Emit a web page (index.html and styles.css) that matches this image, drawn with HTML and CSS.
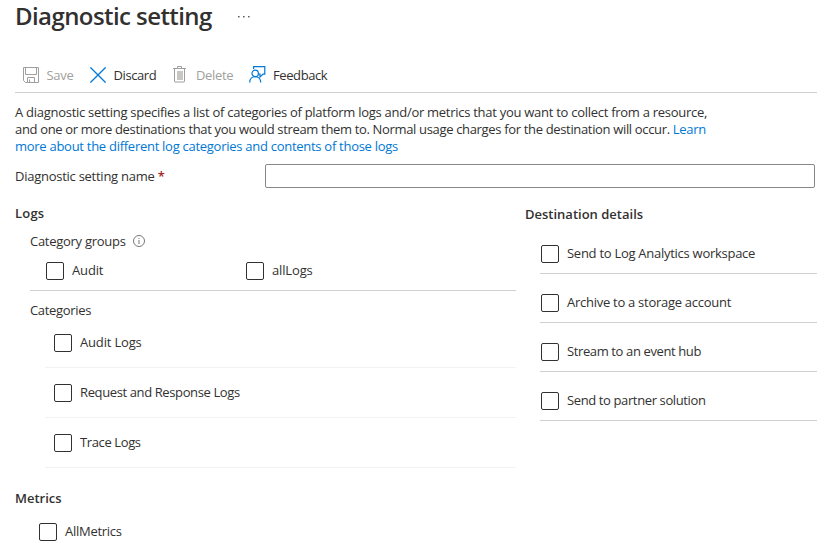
FILE: index.html
```
<!DOCTYPE html>
<html lang="en">
<head>
<meta charset="utf-8">
<title>Diagnostic setting</title>
<link rel="stylesheet" href="styles.css">
</head>
<body>
<header class="header">
  <h1 class="title">Diagnostic setting</h1>
  <svg class="more" width="12" height="3" viewBox="0 0 12 3" fill="#605e5c"><rect x="0" y="1" width="1.6" height="1.4"/><rect x="5" y="1" width="1.6" height="1.4"/><rect x="10" y="1" width="1.6" height="1.4"/></svg>
</header>
<nav class="toolbar">
  <span class="command save disabled">
    <svg width="16" height="16" viewBox="0 0 16 16" fill="none" stroke="#a19f9d"><path d="M.5.5h15v15H2.500l-2-2zM2.500.5v7h11v-7M4.500 15.500v-5h7v5M6.500 12.500v3"/></svg>
    <span class="label">Save</span>
  </span>
  <span class="command discard">
    <svg width="16" height="16" viewBox="0 0 16 16" fill="none" stroke="#0078d4" stroke-width="1.300"><path d="M.4.4l15.200 15.200M15.600.4L.4 15.600"/></svg>
    <span class="label">Discard</span>
  </span>
  <span class="command delete disabled">
    <svg width="14" height="17" viewBox="0 0 14 17"><path d="M4 5h6v9H4z" fill="#c8c6c4"/><path d="M0 2.500h13M4.500 2.500v-2h4v2M1.500 2.500v13q0 .5.5.5h9q.5 0 .5-.5v-13" fill="none" stroke="#a19f9d"/></svg>
    <span class="label">Delete</span>
  </span>
  <span class="command feedback">
    <svg width="17" height="17" viewBox="0 0 17 17" fill="none" stroke="#0078d4" stroke-width="1.200"><path d="M4.600 3V.6h11.200v7.500H14l-3 3V8.100H9.500"/><circle cx="6.200" cy="7.400" r="3.200"/><path d="M.7 16.500c0-3.500 2.400-5.900 5.500-5.900s5.500 2.400 5.500 5.900"/></svg>
    <span class="label">Feedback</span>
  </span>
</nav>
<p class="description">
  <span class="line line-1">A diagnostic setting specifies a list of categories of platform logs and/or metrics that you want to collect from a resource,</span>
  <span class="line line-2">and one or more destinations that you would stream them to. Normal usage charges for the destination will occur. <a>Learn</a></span>
  <span class="line line-3"><a>more about the different log categories and contents of those logs</a></span>
</p>
<div class="name-row">
  <label class="name-label" for="name">Diagnostic setting name <b class="required">*</b></label>
  <input class="name-input" id="name" type="text">
</div>
<main class="columns">
  <section class="sources">
    <h2 class="heading logs">Logs</h2>
    <div class="groups">
      <div class="subheading">Category groups
        <svg width="12" height="12" viewBox="0 0 12 12" fill="none" stroke="#797775"><circle cx="6" cy="6" r="5.500"/><path d="M6 5v4M6 3v1"/></svg>
      </div>
      <div class="group-options">
        <label class="check"><input type="checkbox"><span>Audit</span></label>
        <label class="check"><input type="checkbox"><span>allLogs</span></label>
      </div>
    </div>
    <div class="categories-title">Categories</div>
    <div class="categories">
      <label class="check category"><input type="checkbox"><span>Audit Logs</span></label>
      <label class="check category tight"><input type="checkbox"><span>Request and Response Logs</span></label>
      <label class="check category tight"><input type="checkbox"><span>Trace Logs</span></label>
    </div>
    <h2 class="heading metrics">Metrics</h2>
    <label class="check all-metrics"><input type="checkbox"><span>AllMetrics</span></label>
  </section>
  <section class="destinations">
    <h2 class="heading">Destination details</h2>
    <div class="destination-list">
      <label class="check destination"><input type="checkbox"><span>Send to Log Analytics workspace</span></label>
      <label class="check destination"><input type="checkbox"><span>Archive to a storage account</span></label>
      <label class="check destination tight"><input type="checkbox"><span>Stream to an event hub</span></label>
      <label class="check destination tight"><input type="checkbox"><span>Send to partner solution</span></label>
    </div>
  </section>
</main>
</body>
</html>
```
FILE: styles.css
```
* { box-sizing: border-box; }
body {
  margin: 0;
  height: 552px;
  overflow: hidden;
  padding-left: 15px;
  background: #fff;
  color: #323130;
  font: 13px/18px "Open Sans", "Noto Sans", sans-serif;
  letter-spacing: -0.15px;
  white-space: nowrap;
}
h1, h2, p { margin: 0; }
svg { display: block; flex: none; }
a { color: #0078d4; }
.header { display: flex; align-items: center; height: 32px; }
.title { width: 223px; font-size: 24px; line-height: 32px; font-weight: 600; letter-spacing: -0.58px; }
.toolbar { display: flex; align-items: center; height: 61px; padding: 25px 0 0 8px; border-bottom: 1px solid #d2d0ce; }
.command { display: flex; align-items: center; gap: 7.500px; letter-spacing: -0.4px; }
.save { width: 67px; letter-spacing: -0.3px; }
.discard { width: 83px; }
.delete { width: 75.500px; gap: 9px; letter-spacing: -0.35px; }
.feedback svg { margin-top: -1px; }
.disabled { color: #a19f9d; }
.description { padding-top: 11px; }
.line { display: block; line-height: 17px; letter-spacing: -0.275px; }
.line-2 { letter-spacing: -0.337px; }
.line-3 { letter-spacing: -0.275px; }
.name-row { display: flex; align-items: center; height: 24px; margin-top: 9px; }
.name-label { width: 250px; letter-spacing: -0.26px; }
.required { color: #a4262c; font-weight: 600; }
.name-input { width: 550px; height: 24px; border: 1px solid #8a8886; border-radius: 2px; background: #fff; outline: 0; }
.columns { display: grid; grid-template-columns: 501px 1fr; column-gap: 9px; padding-top: 16px; }
.heading { font-size: 13px; line-height: 20px; font-weight: 600; letter-spacing: 0; }
.logs { margin-top: -1px; letter-spacing: 0.2px; }
.groups { margin-left: 15px; height: 68px; border-bottom: 1px solid #d2d0ce; }
.subheading { display: flex; align-items: center; gap: 7px; height: 36px; letter-spacing: -0.28px; }
.check { display: flex; align-items: center; gap: 8px; height: 18px; letter-spacing: -0.27px; }
.check span { margin-bottom: 2px; }
.check input { appearance: none; flex: none; width: 18px; height: 18px; margin: 0; border: 1px solid #323130; border-radius: 2px; background: #fff; }
.group-options { display: grid; grid-template-columns: 200px 200px; margin: 3px 0 0 16px; }
.group-options .check { letter-spacing: -0.15px; }
.categories-title { padding: 10px 0 0 15px; letter-spacing: -0.33px; }
.categories { padding: 0 0 0 30px; margin-top: -1px; }
.category { height: 50px; padding: 1px 0 0 9px; border-bottom: 1px solid #f3f2f1; letter-spacing: -0.17px; }
.tight { letter-spacing: -0.38px; }
.metrics { margin-top: 20px; }
.all-metrics { margin: 15px 0 0 24px; }
.destination-list { padding: 1px 0 0 15px; }
.destination { height: 49px; padding: 10px 0 0 1px; border-bottom: 1px solid #d2d0ce; }
```
